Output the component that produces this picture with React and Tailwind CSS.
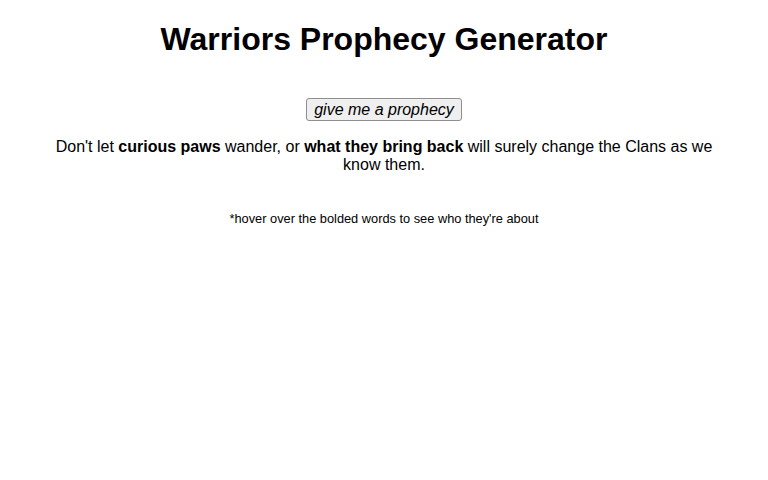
export default function App() {
  return (
    <div className="min-h-screen bg-white px-10 text-center text-black" style={{ fontFamily: '"Liberation Sans", Arial, sans-serif' }}>
      <h1 className="pt-[21px] text-[32px] font-bold leading-[37px]">Warriors Prophecy Generator</h1>

      <div className="mt-[40px]">
        <button className="rounded-[3px] border border-[#8f8f8f] bg-[#efefef] px-[7px] py-[1px] text-[16px] italic leading-[19px]">
          give me a prophecy
        </button>
      </div>

      <p className="mt-[16px] text-[16px] leading-[18px]">
        Don't let <b>curious paws</b> wander, or <b>what they bring back</b> will surely change the Clans as we know them.
      </p>

      <p className="mt-[37px] text-[12.8px] leading-[15px]">*hover over the bolded words to see who they're about</p>
    </div>
  );
}
